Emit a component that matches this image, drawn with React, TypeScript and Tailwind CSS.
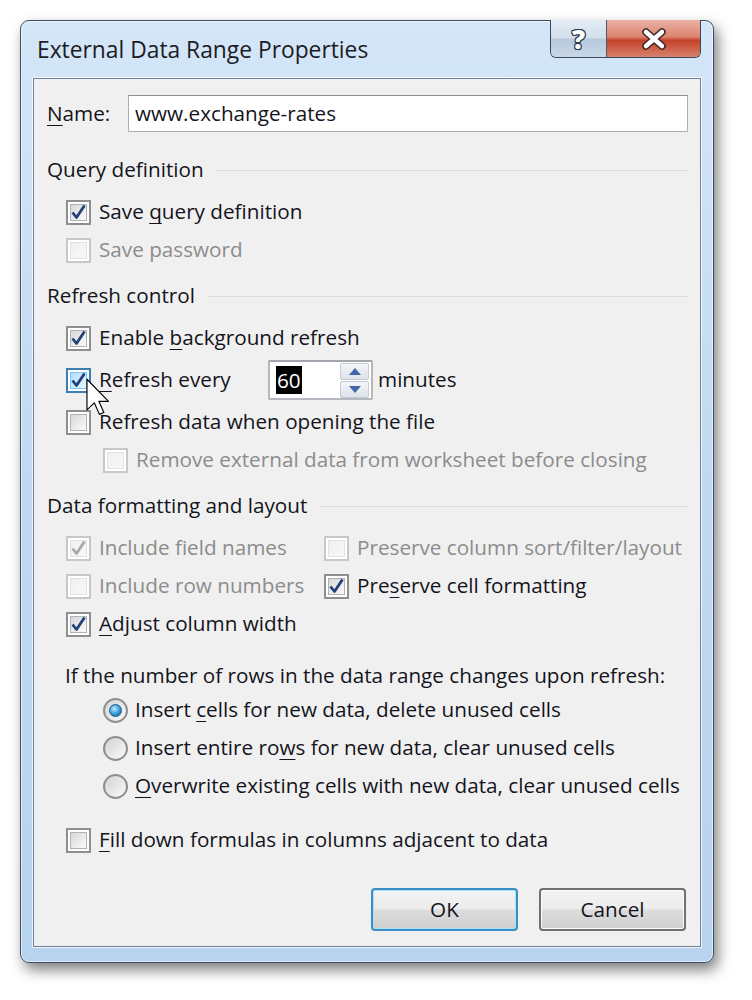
import React from "react";

const text = "text-[#141420]";
const dim = "text-[#8c8c8c]";

function Mn({ children }: { children: React.ReactNode }) {
  return <span className="underline decoration-1 underline-offset-[4px]">{children}</span>;
}

function Check({ checked, disabled, hover }: { checked?: boolean; disabled?: boolean; hover?: boolean }) {
  const outer = disabled ? "border-[#c8c8c8]" : hover ? "border-[#3c7fb1]" : "border-[#8e8f8f]";
  const inner = disabled
    ? "border-[#e2e2e2] from-[#f0f0f0] to-[#f8f8f8]"
    : hover
      ? "border-[#79c6f9] from-[#b1dffd] to-[#e9f7fe]"
      : "border-[#aeb3b9] from-[#d8d8d8] to-[#fbfbfb]";
  return (
    <span className={`relative flex h-[25px] w-[25px] shrink-0 items-center justify-center border-2 bg-white ${outer}`}>
      <span className={`h-[17px] w-[17px] border bg-gradient-to-br ${inner}`} />
      {checked && (
        <svg className="absolute left-0 top-0" width="21" height="21" viewBox="0 0 21 21">
          <path
            d="M4.5 10.5 L8.5 15.5 L16.5 3.5"
            fill="none"
            stroke={disabled ? "#a8a8a8" : "#24407c"}
            strokeWidth="2.8"
            strokeLinejoin="round"
          />
        </svg>
      )}
    </span>
  );
}

function Radio({ on }: { on?: boolean }) {
  return (
    <span className="flex h-[25px] w-[25px] shrink-0 items-center justify-center rounded-full border-2 border-[#8e8f8f] bg-gradient-to-br from-[#d5d5d5] to-[#fafafa]">
      {on ? (
        <span className="h-[13px] w-[13px] rounded-full border border-[#1b5a8a] bg-[radial-gradient(circle_at_40%_35%,#c7ecff_0%,#42a7e3_45%,#0d4f86_100%)]" />
      ) : (
        <span className="h-[15px] w-[15px] rounded-full bg-gradient-to-br from-[#d6d6d6] to-[#f6f6f6]" />
      )}
    </span>
  );
}

function Section({ title, mt }: { title: string; mt: string }) {
  return (
    <div className={`flex h-[38px] items-center ${mt}`}>
      <span className={text}>{title}</span>
      <span className="ml-[12px] h-px flex-1 bg-[#d5dfe5]" />
    </div>
  );
}

function CheckRow({
  label,
  checked,
  disabled,
  mt = "",
  indent = "ml-[19px]",
}: {
  label: React.ReactNode;
  checked?: boolean;
  disabled?: boolean;
  mt?: string;
  indent?: string;
}) {
  return (
    <div className={`flex h-[38px] items-center gap-[8px] ${indent} ${mt}`}>
      <Check checked={checked} disabled={disabled} />
      <span className={`whitespace-nowrap ${disabled ? dim : text}`}>{label}</span>
    </div>
  );
}

function RadioRow({ label, on }: { label: React.ReactNode; on?: boolean }) {
  return (
    <div className="ml-[56px] flex h-[38px] items-center gap-[7px]">
      <Radio on={on} />
      <span className={`whitespace-nowrap ${text}`}>{label}</span>
    </div>
  );
}

function Spinner() {
  return (
    <div className="flex h-[40px] w-[105px] items-center justify-between rounded-[2px] border-2 border-[#b5b9bf] border-t-[#a3a7ad] bg-white pl-[6px] pr-[2px]">
      <span className="bg-black px-px leading-[28px] text-white">60</span>
      <div className="flex flex-col gap-px">
        <span className="flex h-[17px] w-[29px] items-center justify-center rounded-[2px] border border-[#c2cad3] bg-gradient-to-b from-[#f4f6f8] to-[#dde3ea]">
          <svg width="12" height="7" viewBox="0 0 12 7">
            <path d="M0 7 L6 0 L12 7 Z" fill="#3f67a8" />
          </svg>
        </span>
        <span className="flex h-[17px] w-[29px] items-center justify-center rounded-[2px] border border-[#c2cad3] bg-gradient-to-b from-[#f4f6f8] to-[#dde3ea]">
          <svg width="12" height="7" viewBox="0 0 12 7">
            <path d="M0 0 L12 0 L6 7 Z" fill="#3f67a8" />
          </svg>
        </span>
      </div>
    </div>
  );
}

function Btn({ children, def }: { children: React.ReactNode; def?: boolean }) {
  return (
    <div
      className={`flex h-[43px] w-[147px] items-center justify-center rounded-[4px] border-2 bg-[linear-gradient(#f3f3f3_0%,#ececec_48%,#dddddd_52%,#cfcfcf_100%)] ${
        def ? "border-[#3d8ec4] shadow-[inset_0_0_0_1px_#a6e1fb]" : "border-[#707070] shadow-[inset_0_0_0_1px_#fcfcfc]"
      } ${text}`}
    >
      {children}
    </div>
  );
}

export default function App() {
  return (
    <div className="relative h-[1000px] w-[752px] bg-white pl-[20px] pt-[20px] font-['Open_Sans',sans-serif] text-[20.7px]">
      <div className="flex h-[943px] w-[694px] flex-col rounded-[9px] border border-[#3b4d60] bg-gradient-to-b from-[#d4e6f8] via-[#c1d9f1] to-[#b8d3ef] shadow-[4px_7px_14px_rgba(0,0,0,0.5),inset_0_0_0_1px_rgba(255,255,255,0.6)]">
        {/* title bar */}
        <div className="flex h-[57px] items-start">
          <div className="flex h-full flex-1 items-center whitespace-nowrap pl-[16px] pt-[1px] text-[22.8px] text-[#1c1c24]">
            External Data Range Properties
          </div>
          <div className="mr-[12px] mt-[-1px] flex h-[38px] overflow-hidden rounded-b-[6px] border border-t-0 border-[#3a4858]">
            <div className="flex w-[56px] items-center justify-center border-r border-[#4d5a69] bg-[linear-gradient(#e4ecf6_0%,#d2deeb_48%,#b8c9dc_52%,#c9d8e8_100%)]">
              <span className="text-[26px] font-extrabold leading-none text-white [text-shadow:1px_1px_0_#2d3a4a,-1px_-1px_0_#2d3a4a,1px_-1px_0_#2d3a4a,-1px_1px_0_#2d3a4a,0_1px_0_#2d3a4a,0_-1px_0_#2d3a4a,1px_0_0_#2d3a4a,-1px_0_0_#2d3a4a]">
                ?
              </span>
            </div>
            <div className="flex w-[93px] items-center justify-center bg-[linear-gradient(#eab1a5_0%,#dc8571_45%,#c4412a_55%,#d8826c_100%)]">
              <svg width="26" height="22" viewBox="0 0 26 22">
                <path d="M5 4 L21 18 M21 4 L5 18" stroke="#3b2624" strokeWidth="7.5" strokeLinecap="round" />
                <path d="M5 4 L21 18 M21 4 L5 18" stroke="#ffffff" strokeWidth="4.5" strokeLinecap="round" />
              </svg>
            </div>
          </div>
        </div>

        {/* client area */}
        <div className="mx-[12px] flex h-[869px] flex-col border border-[#6f8194] bg-[#f0f0f0] pl-[13px] pr-[12px] pt-[16px] shadow-[0_0_0_1px_rgba(255,255,255,0.75)]">
          <div className="flex h-[37px] items-center">
            <span className={`w-[81px] ${text}`}>
              <Mn>N</Mn>ame:
            </span>
            <div className="flex h-full flex-1 items-center border border-[#abadb3] border-t-[#8d9196] bg-white pl-[6px] text-[#141420]">
              www.exchange-rates
            </div>
          </div>

          <Section title="Query definition" mt="mt-[19px]" />
          <CheckRow mt="mt-[4px]" checked label={<>Save <Mn>q</Mn>uery definition</>} />
          <CheckRow disabled label="Save password" />

          <Section title="Refresh control" mt="mt-[8px]" />
          <CheckRow mt="mt-[4px]" checked label={<>Enable <Mn>b</Mn>ackground refresh</>} />
          <div className="ml-[19px] mt-[4px] flex h-[38px] items-center">
            <Check checked hover />
            <span className={`ml-[8px] w-[169px] ${text}`}>
              <Mn>R</Mn>efresh every
            </span>
            <Spinner />
            <span className={`ml-[5px] ${text}`}>minutes</span>
          </div>
          <CheckRow mt="mt-[4px]" label={<>Refresh data when opening the f<Mn>i</Mn>le</>} />
          <CheckRow indent="ml-[56px]" disabled label="Remove external data from worksheet before closing" />

          <Section title="Data formatting and layout" mt="mt-[8px]" />
          <div className="mt-[4px] flex">
            <div className="w-[277px] shrink-0">
              <CheckRow disabled checked label="Include field names" />
              <CheckRow disabled label="Include row numbers" />
            </div>
            <div>
              <CheckRow indent="" disabled label="Preserve column sort/filter/layout" />
              <CheckRow indent="" checked label={<>Pre<Mn>s</Mn>erve cell formatting</>} />
            </div>
          </div>
          <CheckRow checked label={<><Mn>A</Mn>djust column width</>} />

          <div className={`ml-[18px] mt-[18px] flex h-[30px] items-center whitespace-nowrap ${text}`}>
            If the number of rows in the data range changes upon refresh:
          </div>
          <RadioRow on label={<>Insert <Mn>c</Mn>ells for new data, delete unused cells</>} />
          <RadioRow label={<>Insert entire ro<Mn>w</Mn>s for new data, clear unused cells</>} />
          <RadioRow label={<><Mn>O</Mn>verwrite existing cells with new data, clear unused cells</>} />

          <CheckRow mt="mt-[16px]" label={<><Mn>F</Mn>ill down formulas in columns adjacent to data</>} />

          <div className="mt-[29px] flex justify-end gap-[21px] pr-[2px]">
            <Btn def>OK</Btn>
            <Btn>Cancel</Btn>
          </div>
        </div>
      </div>

      {/* mouse pointer over the "Refresh every" checkbox */}
      <svg className="absolute left-[86px] top-[378px]" width="24" height="38" viewBox="0 0 12.5 19.5">
        <path
          d="M0.5 0.5 L0.5 16.5 L4.3 12.8 L7 18.8 L9.3 17.8 L6.7 12 L11.7 12 Z"
          fill="#ffffff"
          stroke="#000000"
          strokeWidth="0.6"
          strokeLinejoin="round"
        />
      </svg>
    </div>
  );
}
